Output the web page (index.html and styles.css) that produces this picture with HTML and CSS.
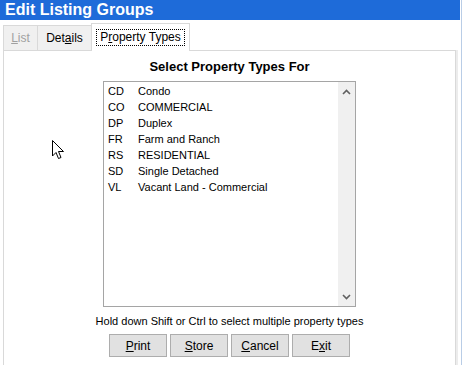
FILE: index.html
```html
<!DOCTYPE html>
<html>
<head>
<meta charset="utf-8">
<link rel="stylesheet" href="styles.css">
</head>
<body>
<div class="app">
  <div class="titlebar">Edit Listing Groups</div>
  <div class="tabs">
    <div class="tab disabled"><u>L</u>ist</div>
    <div class="tab details">Det<u>a</u>ils</div>
    <div class="tab active"><span class="focus">P<u>r</u>operty Types</span></div>
  </div>
  <div class="panel">
    <div class="heading">Select Property Types For</div>
    <div class="listbox">
      <div class="items">
        <div class="row"><span class="code">CD</span><span>Condo</span></div>
        <div class="row"><span class="code">CO</span><span>COMMERCIAL</span></div>
        <div class="row"><span class="code">DP</span><span>Duplex</span></div>
        <div class="row"><span class="code">FR</span><span>Farm and Ranch</span></div>
        <div class="row"><span class="code">RS</span><span>RESIDENTIAL</span></div>
        <div class="row"><span class="code">SD</span><span>Single Detached</span></div>
        <div class="row"><span class="code">VL</span><span>Vacant Land - Commercial</span></div>
      </div>
      <div class="scrollbar">
        <svg class="arrow" width="9" height="6" viewBox="0 0 9 6"><path d="M1 5 L4.5 1.5 L8 5" fill="none" stroke="#606060" stroke-width="1.6"/></svg>
        <svg class="arrow" width="9" height="6" viewBox="0 0 9 6"><path d="M1 1 L4.5 4.5 L8 1" fill="none" stroke="#606060" stroke-width="1.6"/></svg>
      </div>
    </div>
    <div class="hint">Hold down Shift or Ctrl to select multiple property types</div>
    <div class="buttons">
      <button class="btn"><u>P</u>rint</button>
      <button class="btn"><u>S</u>tore</button>
      <button class="btn"><u>C</u>ancel</button>
      <button class="btn">E<u>x</u>it</button>
    </div>
  </div>
</div>
<svg class="cursor" width="13" height="20" viewBox="0 0 13 20"><path d="M0.5 0.5 L0.5 16 L4 12.5 L6.5 18.5 L9 17.5 L6.5 11.5 L11.5 11.5 Z" fill="#fff" stroke="#000" stroke-width="1"/></svg>
</body>
</html>
```
FILE: styles.css
```css
html, body {
  margin: 0;
  padding: 0;
}
body {
  width: 462px;
  height: 365px;
  overflow: hidden;
  background: #fff;
  font-family: "Liberation Sans", Arial, sans-serif;
  font-size: 11px;
  color: #000;
  position: relative;
}
.app {
  width: 461px;
  height: 365px;
  border-right: 1px solid #b9cde6;
  display: flex;
  flex-direction: column;
}
.titlebar {
  flex: none;
  height: 20px;
  width: 460px;
  background: #1e6bd9;
  color: #fff;
  font-weight: bold;
  font-size: 16px;
  line-height: 20px;
  padding-left: 5px;
  box-sizing: border-box;
}
.tabs {
  flex: none;
  display: flex;
  align-items: flex-end;
  height: 30px;
  padding-left: 3px;
  position: relative;
  z-index: 1;
}
.tab {
  height: 25px;
  box-sizing: border-box;
  background: #f0f0f0;
  border: 1px solid #d9d9d9;
  border-bottom: none;
  line-height: 24px;
  font-size: 12px;
  text-align: center;
}
.tab + .tab {
  margin-left: -1px;
}
.tab.disabled {
  color: #a0a0a0;
  width: 35px;
}
.tab.details {
  width: 55px;
}
.tab.active {
  background: #fff;
  width: 99px;
  height: 28px;
  margin-bottom: -1px;
  display: flex;
  align-items: center;
  justify-content: center;
}
.focus {
  border: 1px dotted #000;
  padding: 0 3px;
  line-height: 15px;
}
.panel {
  margin-left: 3px;
  width: 453px;
  flex: 1;
  box-sizing: border-box;
  border: 1px solid #d9d9d9;
  border-bottom: none;
  box-shadow: 2px 0 0 #ececec;
  display: flex;
  flex-direction: column;
  align-items: center;
}
.heading {
  font-weight: bold;
  font-size: 13px;
  margin-top: 8px;
  line-height: 16px;
}
.listbox {
  margin-top: 6px;
  width: 253px;
  height: 226px;
  box-sizing: border-box;
  border: 1px solid #a5a5a5;
  display: flex;
}
.items {
  flex: 1;
  padding: 1px 0 0 4px;
}
.row {
  height: 16px;
  line-height: 16px;
  display: flex;
}
.code {
  width: 30px;
}
.scrollbar {
  width: 17px;
  background: #f0f0f0;
  display: flex;
  flex-direction: column;
  justify-content: space-between;
  align-items: center;
  padding: 7px 0 6px;
  box-sizing: border-box;
}
.arrow {
  display: block;
}
.hint {
  margin-top: 6px;
  line-height: 16px;
}
.buttons {
  margin-top: 5px;
  display: flex;
  gap: 3px;
}
.btn {
  width: 58px;
  height: 23px;
  background: #e1e1e1;
  border: 1px solid #adadad;
  font-family: "Liberation Sans", Arial, sans-serif;
  font-size: 12px;
  color: #000;
  padding: 0;
  margin: 0;
}
.cursor {
  position: absolute;
  left: 52px;
  top: 140px;
}
```
